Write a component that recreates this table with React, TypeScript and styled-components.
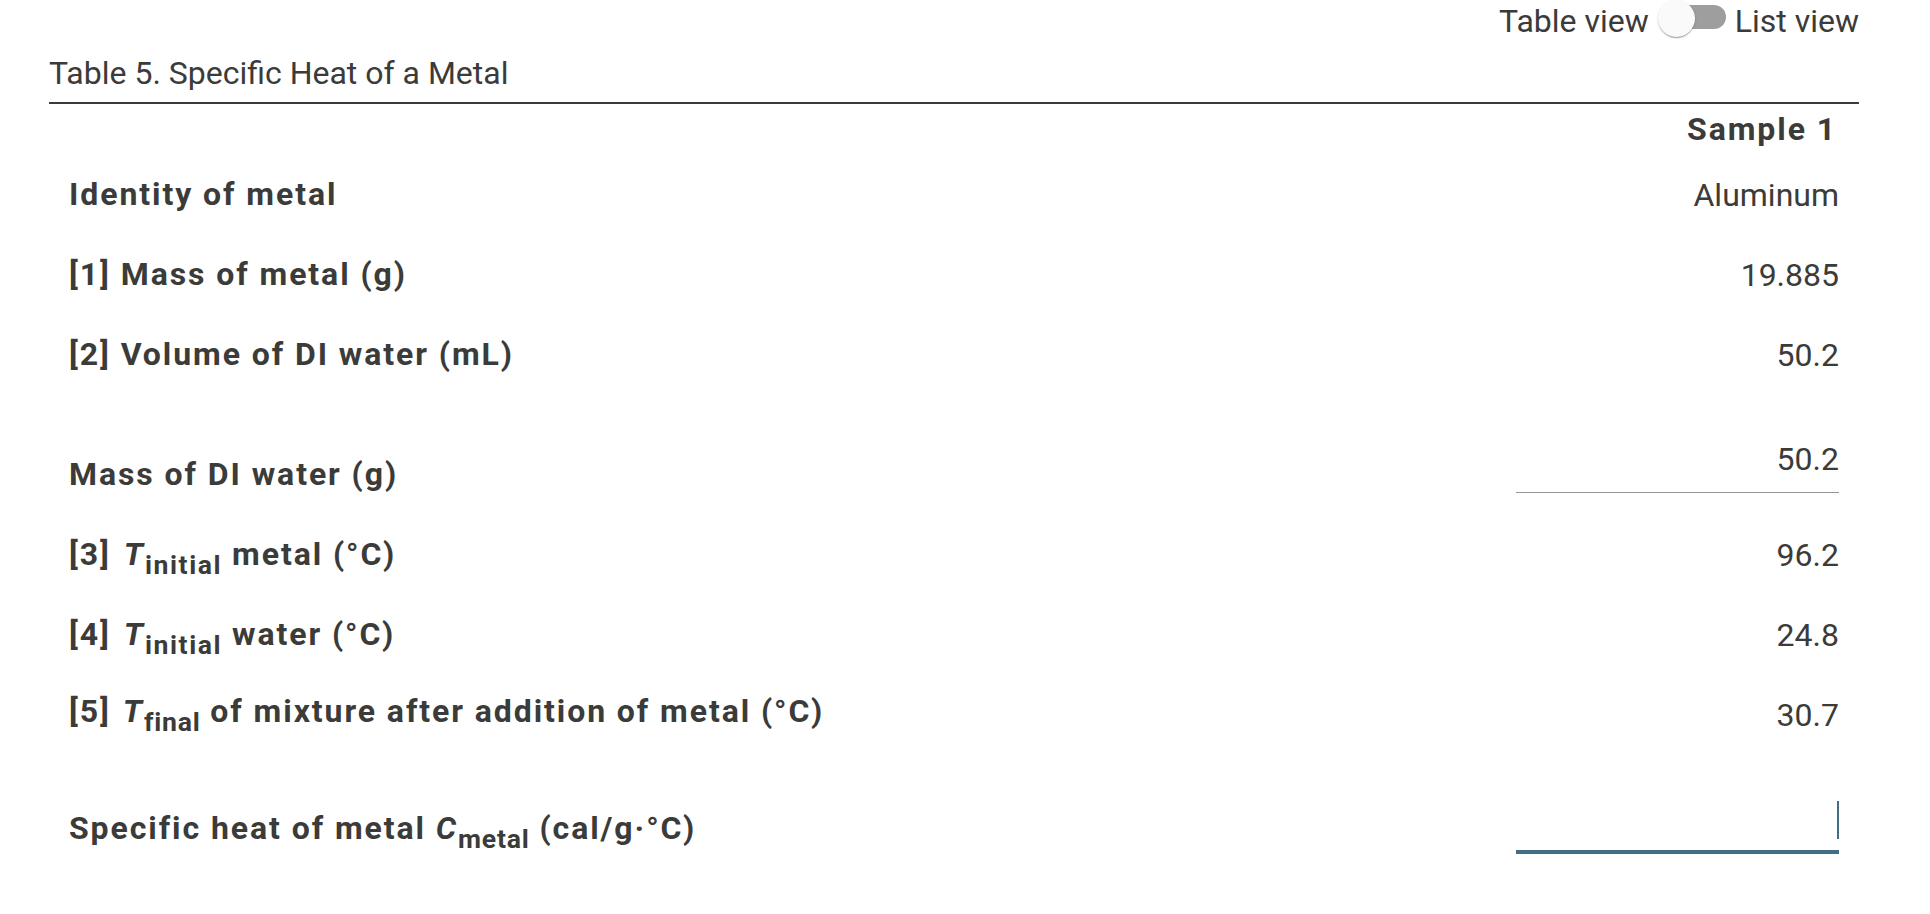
import React from "react";
import styled, { createGlobalStyle } from "styled-components";

const GlobalStyle = createGlobalStyle`
  html, body {
    margin: 0;
    padding: 0;
    background: #ffffff;
  }
  body {
    font-family: Roboto, "Noto Sans", "Liberation Sans", sans-serif;
    color: #3b3b39;
  }
`;

const Page = styled.div`
  width: 1810px;
  margin-left: 49px;
  display: flex;
  flex-direction: column;
`;

const ToggleBar = styled.div`
  display: flex;
  justify-content: flex-end;
  align-items: flex-start;
  height: 42px;
  padding-top: 1px;
  box-sizing: border-box;
`;

const ToggleLabel = styled.span`
  font-size: 32px;
  line-height: 40px;
  color: #3b3b39;
`;

const Switch = styled.div`
  position: relative;
  width: 68px;
  height: 38px;
  margin: -1px 9px 0 9px;
  display: flex;
  align-items: flex-start;
  justify-content: flex-end;
`;

const Track = styled.div`
  width: 60px;
  height: 24px;
  margin-top: 5px;
  border-radius: 12px;
  background: #9e9e9e;
`;

const Thumb = styled.div`
  position: absolute;
  left: 0;
  top: 0;
  width: 37px;
  height: 37px;
  border-radius: 50%;
  background: #fafafa;
  box-shadow: 0 2px 1px -1px rgba(0, 0, 0, 0.2), 0 1px 1px 0 rgba(0, 0, 0, 0.14),
    0 1px 3px 0 rgba(0, 0, 0, 0.12);
`;

const Caption = styled.div`
  margin-top: 11px;
  font-size: 32px;
  line-height: 40px;
  padding-bottom: 9px;
  border-bottom: 2px solid #3b3b39;
`;

const Table = styled.div`
  display: flex;
  flex-direction: column;
  padding: 0 20px;
`;

const Row = styled.div<{ $h: number; $align?: string }>`
  display: flex;
  justify-content: space-between;
  align-items: ${(p) => p.$align || "center"};
  height: ${(p) => p.$h}px;
`;

const HeaderCell = styled.div`
  margin-left: auto;
  padding-right: 2px;
  font-size: 32px;
  line-height: 40px;
  font-weight: 700;
  letter-spacing: 0.06em;
`;

const Label = styled.div<{ $pb?: number; $pt?: number }>`
  font-size: 32px;
  font-weight: 700;
  letter-spacing: 0.06em;
  line-height: normal;
  padding-top: ${(p) => p.$pt || 0}px;
  padding-bottom: ${(p) => p.$pb || 0}px;
  white-space: nowrap;
`;

const Sym = styled.i<{ $ml?: number }>`
  font-style: italic;
  margin-left: ${(p) => p.$ml || 0}px;
`;

const Sub = styled.sub<{ $tight?: boolean }>`
  font-size: 0.83em;
  vertical-align: -9px;
  line-height: 1;
  letter-spacing: ${(p) => (p.$tight ? "0.03em" : "0.06em")};
`;

const Value = styled.div`
  font-size: 32px;
  line-height: 40px;
  padding-top: 1px;
  text-align: right;
`;

const InputBox = styled.div<{ $active?: boolean }>`
  align-self: flex-end;
  width: 323px;
  display: flex;
  justify-content: flex-end;
  font-size: 32px;
  line-height: 38px;
  padding-bottom: ${(p) => (p.$active ? 11 : 14)}px;
  margin-bottom: ${(p) => (p.$active ? 48 : 21)}px;
  border-bottom: ${(p) => (p.$active ? "4px solid #436e82" : "1px solid #949494")};
`;

const Caret = styled.span`
  display: block;
  width: 2px;
  height: 38px;
  background: #436e82;
`;

export default function App() {
  return (
    <>
      <GlobalStyle />
      <Page>
        <ToggleBar>
          <ToggleLabel>Table view</ToggleLabel>
          <Switch>
            <Track />
            <Thumb />
          </Switch>
          <ToggleLabel>List view</ToggleLabel>
        </ToggleBar>
        <Caption>Table 5. Specific Heat of a Metal</Caption>
        <Table>
          <Row $h={50}>
            <HeaderCell>Sample 1</HeaderCell>
          </Row>
          <Row $h={80}>
            <Label>Identity of metal</Label>
            <Value>Aluminum</Value>
          </Row>
          <Row $h={80}>
            <Label>[1] Mass of metal (g)</Label>
            <Value>19.885</Value>
          </Row>
          <Row $h={80}>
            <Label>[2] Volume of DI water (mL)</Label>
            <Value>50.2</Value>
          </Row>
          <Row $h={120} $align="flex-end">
            <Label $pb={21}>Mass of DI water (g)</Label>
            <InputBox>50.2</InputBox>
          </Row>
          <Row $h={80}>
            <Label $pt={5}>
              [3] <Sym $ml={3}>T</Sym>
              <Sub>initial</Sub> metal (°C)
            </Label>
            <Value>96.2</Value>
          </Row>
          <Row $h={80}>
            <Label $pt={5}>
              [4] <Sym $ml={3}>T</Sym>
              <Sub>initial</Sub> water (°C)
            </Label>
            <Value>24.8</Value>
          </Row>
          <Row $h={80}>
            <Label>
              [5] <Sym $ml={2}>T</Sym>
              <Sub $tight>final</Sub> of mixture after addition of metal (°C)
            </Label>
            <Value>30.7</Value>
          </Row>
          <Row $h={148}>
            <Label $pt={5}>
              Specific heat of metal <Sym>C</Sym>
              <Sub $tight>metal</Sub> (cal/g·°C)
            </Label>
            <InputBox $active>
              <Caret />
            </InputBox>
          </Row>
        </Table>
      </Page>
    </>
  );
}
